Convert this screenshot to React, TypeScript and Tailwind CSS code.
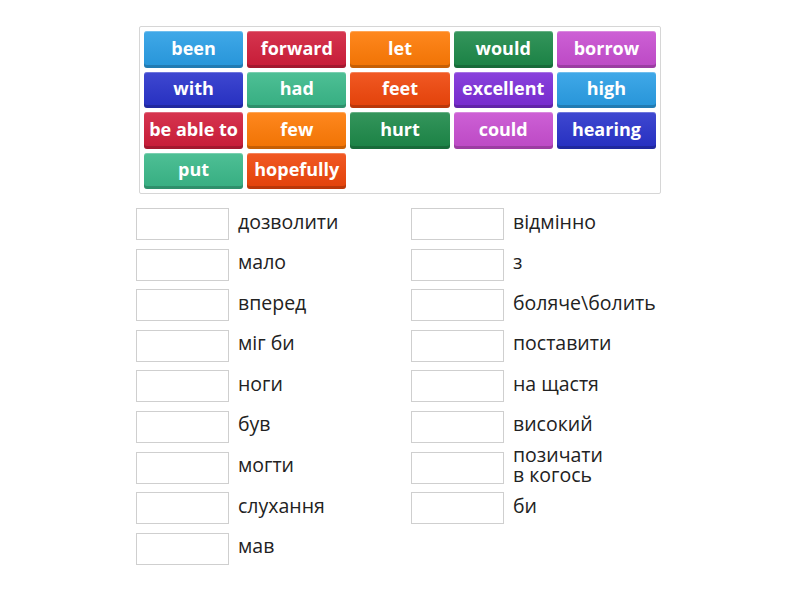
import React from "react";

const tiles: { t: string; c: string }[] = [
  { t: "been", c: "bg-[#2b9fe6]" },
  { t: "forward", c: "bg-[#d21f3c]" },
  { t: "let", c: "bg-[#ff7b06]" },
  { t: "would", c: "bg-[#1e8a4a]" },
  { t: "borrow", c: "bg-[#c84fd1]" },
  { t: "with", c: "bg-[#2a34cc]" },
  { t: "had", c: "bg-[#3bb98a]" },
  { t: "feet", c: "bg-[#f0470c]" },
  { t: "excellent", c: "bg-[#7d2ed9]" },
  { t: "high", c: "bg-[#2b9fe6]" },
  { t: "be able to", c: "bg-[#d21f3c]" },
  { t: "few", c: "bg-[#ff7b06]" },
  { t: "hurt", c: "bg-[#1e8a4a]" },
  { t: "could", c: "bg-[#c84fd1]" },
  { t: "hearing", c: "bg-[#2a34cc]" },
  { t: "put", c: "bg-[#3bb98a]" },
  { t: "hopefully", c: "bg-[#f0470c]" },
];

const left = ["дозволити", "мало", "вперед", "міг би", "ноги", "був", "могти", "слухання", "мав"];
const right = ["відмінно", "з", "боляче\\болить", "поставити", "на щастя", "високий", "позичати\nв когось", "би"];

function Row({ label }: { label: string }) {
  return (
    <div className="flex items-center h-[32px]">
      <div className="w-[93px] h-[32px] shrink-0 border border-[#cfcfcf] bg-white" />
      <div className="ml-[9px] text-[19.5px] leading-[20px] text-[#222] whitespace-pre -mt-[5px]">
        {label}
      </div>
    </div>
  );
}

export default function App() {
  return (
    <div
      className="w-[800px] h-[600px] bg-white"
      style={{ fontFamily: '"Open Sans", "Noto Sans", sans-serif' }}
    >
      <div className="pt-[26px] flex justify-center">
        <div className="w-[522px] border border-[#d6d6d6] rounded-[2px] p-[4px] grid grid-cols-5 gap-[4px]">
          {tiles.map((x) => (
            <div
              key={x.t}
              className={`${x.c} h-[36.5px] rounded-[3px] relative overflow-hidden flex items-center justify-center shadow-[inset_0_-3px_0_rgba(0,0,0,0.18),inset_0_1px_0_rgba(255,255,255,0.25)]`}
            >
              <div className="absolute inset-0 bg-gradient-to-b from-white/10 to-black/5" />
              <span className="relative text-white font-bold text-[18px] leading-none -mt-[3px] whitespace-nowrap">
                {x.t}
              </span>
            </div>
          ))}
        </div>
      </div>
      <div className="mt-[14px] w-[528px] mx-auto flex">
        <div className="w-[275px] flex flex-col gap-[8.6px]">
          {left.map((l) => (
            <Row key={l} label={l} />
          ))}
        </div>
        <div className="flex-1 flex flex-col gap-[8.6px]">
          {right.map((l) => (
            <Row key={l} label={l} />
          ))}
        </div>
      </div>
    </div>
  );
}
